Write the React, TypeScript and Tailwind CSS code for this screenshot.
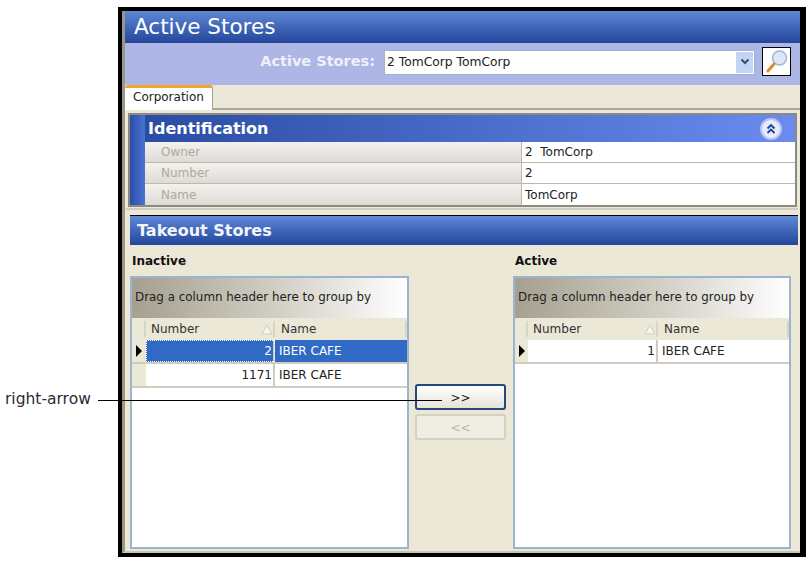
import React from 'react';

type GridRow = { number: string; name: string; selected?: boolean };

const inactiveRows: GridRow[] = [
  { number: '2', name: 'IBER CAFE', selected: true },
  { number: '1171', name: 'IBER CAFE' },
];

const activeRows: GridRow[] = [{ number: '1', name: 'IBER CAFE' }];

const StoreGrid: React.FC<{ rows: GridRow[]; gutterWidth: string; numberWidth: string; nameWidth: string }> = ({
  rows,
  gutterWidth,
  numberWidth,
  nameWidth,
}) => (
  <div className="flex-1 min-h-0 border-2 border-[#9db4cf] bg-white flex flex-col overflow-hidden">
    <div className="h-[40px] shrink-0 flex items-center pl-[3px] text-[11.9px] text-[#222] bg-gradient-to-r from-[#a5a08f] via-[#cfccc2] to-white">
      Drag a column header here to group by
    </div>
    <div className="h-[22px] shrink-0 flex bg-[#ebe8d8] text-[12px] text-[#333]">
      <div className={`${gutterWidth} border-r-2 border-[#d8d5c6] my-[3px]`} />
      <div className={`${numberWidth} pl-[5px] flex items-center justify-between border-r-2 border-[#d8d5c6] my-[3px]`}>
        <span>Number</span>
        <svg width="12" height="11" viewBox="0 0 12 11">
          <path d="M6 1 L11 10 L1 10 Z" fill="#f6f5ee" stroke="#d0cdc0" />
        </svg>
      </div>
      <div className={`${nameWidth} pl-[6px] flex items-center border-r-2 border-[#d8d5c6] my-[3px]`}>Name</div>
    </div>
    {rows.map((row, index) => (
      <div key={row.number} className="h-[24px] shrink-0 flex border-b-2 border-[#d0cdc0] text-[12px]">
        <div className={`${gutterWidth} shrink-0 bg-[#ebe8d8] flex items-center justify-center`}>
          {index === 0 && (
            <svg width="8" height="12" viewBox="0 0 8 12">
              <path d="M1 0 L7 6 L1 12 Z" fill="#000" />
            </svg>
          )}
        </div>
        <div
          className={`${numberWidth} flex items-center justify-end pr-[1px] border-r-2 border-[#d0cdc0] ${
            row.selected ? 'bg-[#316ac5] text-white outline outline-1 -outline-offset-1 outline-dotted outline-white' : 'bg-white text-[#222]'
          }`}
        >
          {row.number}
        </div>
        <div className={`${nameWidth} flex items-center pl-[4px] ${row.selected ? 'bg-[#316ac5] text-white' : 'bg-white text-[#222]'}`}>
          {row.name}
        </div>
      </div>
    ))}
  </div>
);

const InfoRow: React.FC<{ label: string; value: string }> = ({ label, value }) => (
  <div className="h-[21px] flex border-b border-[#bdb9a9] text-[12px] last:border-b-0">
    <div className="w-[376px] pl-[16px] flex items-center text-[#aeaa9b] bg-gradient-to-b from-[#f3f2ee] to-[#dcdbd6]">{label}</div>
    <div className="flex-1 pl-[3px] flex items-center bg-white border-l border-[#bdb9a9] text-[#222] whitespace-pre">{value}</div>
  </div>
);

const App: React.FC = () => {
  return (
    <div className="relative w-[809px] h-[562px] bg-white overflow-hidden flex font-['DejaVu_Sans',sans-serif]">
      <div className="w-[118px] shrink-0 pt-[389px] pl-[5px] text-[15.5px] leading-[20px] text-[#2b2b3a]">right-arrow</div>

      <div className="mt-[7px] w-[688px] h-[550px] border-[4px] border-r-[6px] border-black bg-[#ebe8d8] flex flex-col">
        <div className="flex-1 min-h-0 flex flex-col border-l-[3px] border-b-2 border-[#9a9788] border-b-[#c9c6b8]">
          <div className="h-[32px] shrink-0 pl-[9px] pt-[1px] flex items-center text-[21.5px] text-white bg-gradient-to-b from-[#5f88d6] to-[#24469c]">
            Active Stores
          </div>

          <div className="h-[42px] shrink-0 bg-[#adb6e5] flex items-center justify-end pr-[9px] pb-[4px]">
            <span className="text-[14.5px] font-bold text-[#eef0fa] mr-[9px]">Active Stores:</span>
            <div className="w-[371px] h-[25px] mr-[7px] border border-[#9db4cf] bg-white flex items-center pl-[2px] text-[12.3px] text-[#222]">
              <span className="flex-1">2 TomCorp TomCorp</span>
              <span className="w-[17px] h-[21px] mr-[1px] bg-[#c3d4f4] flex items-center justify-center">
                <svg width="10" height="8" viewBox="0 0 10 8">
                  <path d="M1.5 1.5 L5 5 L8.5 1.5" fill="none" stroke="#3c4d6e" strokeWidth="2" />
                </svg>
              </span>
            </div>
            <div className="w-[29px] h-[29px] -translate-y-[1px] border border-black bg-white flex items-center justify-center">
              <svg width="25" height="25" viewBox="0 0 25 25">
                <circle cx="15.5" cy="9" r="7" fill="#dbe8f6" stroke="#9fb9d4" strokeWidth="1.5" />
                <path d="M10 15 L4 22" stroke="#e08a2c" strokeWidth="3" strokeLinecap="round" />
              </svg>
            </div>
          </div>

          <div className="h-[25px] shrink-0 flex border-b-2 border-[#a9a698] bg-[#ebe8d8]">
            <div className="w-[88px] h-[25px] pl-[8px] pb-[4px] flex items-center text-[12px] text-[#222] bg-white border-t-[3px] border-t-[#f2a531] border-r border-r-[#a9a698] rounded-t-[3px]">
              Corporation
            </div>
          </div>

          <div className="flex-1 min-h-0 flex flex-col pl-[3px] pr-[2px] pt-[3px]">
            <div className="h-[94px] shrink-0 mr-[1px] border-2 border-[#8c8a80] flex">
              <div className="w-[15px] shrink-0 bg-gradient-to-r from-[#2c4fa5] to-[#4b72d6]" />
              <div className="flex-1 flex flex-col">
                <div className="h-[27px] shrink-0 pl-[3px] pr-[13px] flex items-center justify-between text-[16px] font-bold text-white bg-gradient-to-r from-[#2a4ca3] to-[#6a8cf0]">
                  <span>Identification</span>
                  <span className="w-[22px] h-[22px] rounded-full border-2 border-[#b9c6ef] bg-[#e6ecfa] flex items-center justify-center">
                    <svg width="12" height="12" viewBox="0 0 12 12">
                      <path d="M2.5 5.5 L6 2 L9.5 5.5 M2.5 10 L6 6.5 L9.5 10" fill="none" stroke="#1c3f9c" strokeWidth="1.8" />
                    </svg>
                  </span>
                </div>
                <InfoRow label="Owner" value="2  TomCorp" />
                <InfoRow label="Number" value="2" />
                <InfoRow label="Name" value="TomCorp" />
              </div>
            </div>

            <div className="h-[2px] mt-[1px] mb-[5px] bg-[#cfccbd] -ml-[2px]" />

            <div className="h-[30px] shrink-0 ml-[2px] pl-[7px] flex items-center text-[16px] font-bold text-[#f3f5fc] border-t border-black bg-gradient-to-b from-[#5f88d6] to-[#24469c]">
              Takeout Stores
            </div>

            <div className="flex-1 min-h-0 flex pl-[2px] pb-[2px]">
              <div className="w-[279px] shrink-0 flex flex-col">
                <div className="h-[31px] shrink-0 pl-[2px] flex items-center text-[12px] font-bold text-[#111]">Inactive</div>
                <StoreGrid rows={inactiveRows} gutterWidth="w-[14px]" numberWidth="w-[129px]" nameWidth="w-[132px]" />
              </div>

              <div className="w-[104px] shrink-0 flex flex-col pt-[139px] pl-[6px] gap-[4px]">
                <div className="w-[91px] h-[26px] shrink-0 pt-[1px] rounded-[3px] border-2 border-[#24487f] bg-gradient-to-b from-white to-[#e6e3d6] flex items-center justify-center text-[12px] text-[#222]">
                  &gt;&gt;
                </div>
                <div className="w-[91px] h-[26px] shrink-0 pt-[1px] rounded-[3px] border-2 border-[#d4d1c3] bg-[#f0eee3] flex items-center justify-center text-[12px] text-[#b9b6a8]">
                  &lt;&lt;
                </div>
              </div>

              <div className="w-[278px] shrink-0 flex flex-col">
                <div className="h-[31px] shrink-0 pl-[2px] flex items-center text-[12px] font-bold text-[#111]">Active</div>
                <StoreGrid rows={activeRows} gutterWidth="w-[13px]" numberWidth="w-[130px]" nameWidth="w-[131px]" />
              </div>
            </div>
          </div>
        </div>
      </div>

      {/* leader line from the label to the button */}
      <div className="absolute left-[98px] top-[400px] w-[344px] h-[1px] bg-black" />
    </div>
  );
};

export default App;
